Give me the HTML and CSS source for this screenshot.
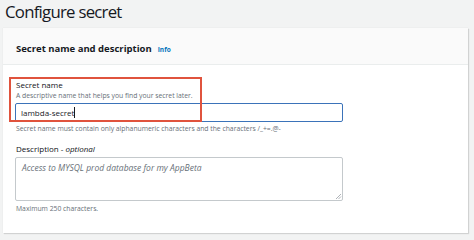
FILE: index.html
```html
<!DOCTYPE html>
<html lang="en">
<head>
    <meta charset="UTF-8">
    <meta name="viewport" content="width=device-width, initial-scale=1.0">
    <title>Configure secret</title>
    <link rel="stylesheet" href="styles.css">
</head>
<body>
    <h1 class="page-title">Configure secret</h1>

    <div class="panel">
        <div class="panel-header">
            <h2>Secret name and description</h2>
            <a class="info-link" href="#">Info</a>
        </div>

        <div class="panel-body">
            <!-- Highlight box drawn over the first field -->
            <div class="highlight"></div>

            <div class="field">
                <label for="secretName">Secret name</label>
                <div class="field-desc">A descriptive name that helps you find your secret later.</div>
                <div class="input-box focused">
                    <span class="input-value">lambda-secret</span><span class="caret"></span>
                </div>
                <div class="field-hint">Secret name must contain only alphanumeric characters and the characters /_+=.@-</div>
            </div>

            <div class="field">
                <label for="description">Description - <i>optional</i></label>
                <div class="textarea-box">
                    <span class="placeholder">Access to MYSQL prod database for my AppBeta</span>
                    <svg class="grip" width="7" height="7" viewBox="0 0 7 7">
                        <path d="M1 6 L6 1 M3.5 6 L6 3.5" stroke="#9aa0a6" stroke-width="0.8" fill="none"/>
                    </svg>
                </div>
                <div class="field-hint">Maximum 250 characters.</div>
            </div>
        </div>
    </div>
</body>
</html>
```

FILE: styles.css
```css
body {
    font-family: "Open Sans", Arial, sans-serif;
    background-color: #f2f3f3;
    color: #16191f;
    margin: 0;
    padding: 0;
    width: 474px;
    height: 240px;
    overflow: hidden;
}
.page-title {
    margin: 0;
    padding: 3px 0 0 5px;
    height: 25px;
    font-size: 16.8px;
    line-height: 18px;
    letter-spacing: -0.75px;
    font-weight: 400;
    color: #16191f;
}
.panel {
    margin-left: 3px;
    width: 465px;
    height: 205px;
    background-color: #fff;
    box-shadow: 1px 1px 1px rgba(0, 0, 0, 0.12), 0 0 1px rgba(0, 0, 0, 0.1);
}
.panel-header {
    display: flex;
    align-items: baseline;
    gap: 6px;
    height: 37px;
    box-sizing: border-box;
    padding: 14px 13px 0;
    background-color: #fafafa;
    border-bottom: 1px solid #eaeded;
}
.panel-header h2 {
    margin: 0;
    font-size: 9.5px;
    font-weight: 700;
}
.info-link {
    font-size: 6.5px;
    font-weight: 700;
    color: #0073bb;
    text-decoration: none;
}
.panel-body {
    position: relative;
    padding: 14px 12px 0;
}
.highlight {
    position: absolute;
    left: 6px;
    top: 12px;
    width: 189px;
    height: 41px;
    border: 2px solid #e0533d;
}
.field {
    margin-bottom: 9px;
}
.field label {
    display: block;
    font-size: 8px;
    line-height: 12px;
    padding-left: 1px;
    color: #0f1217;
}
.field-desc,
.field-hint {
    font-size: 6.8px;
    line-height: 10px;
    color: #687078;
    padding-left: 1px;
}
.input-box {
    display: flex;
    align-items: center;
    width: 328px;
    height: 19px;
    box-sizing: border-box;
    margin: 2px 0;
    padding-left: 5px;
    border: 1px solid #aab7b8;
    border-radius: 2px;
    font-size: 8px;
}
.input-box.focused {
    border-color: #3b73b9;
}
.caret {
    width: 1px;
    height: 11px;
    background-color: #16191f;
}
.textarea-box {
    position: relative;
    width: 328px;
    height: 44px;
    box-sizing: border-box;
    margin: 2px 0 3px;
    padding: 4px 6px;
    border: 1px solid #c4c9cc;
    border-radius: 2px;
    font-size: 8.5px;
}
.placeholder {
    font-style: italic;
    color: #687078;
}
.grip {
    position: absolute;
    right: 0;
    bottom: 0;
}
```
